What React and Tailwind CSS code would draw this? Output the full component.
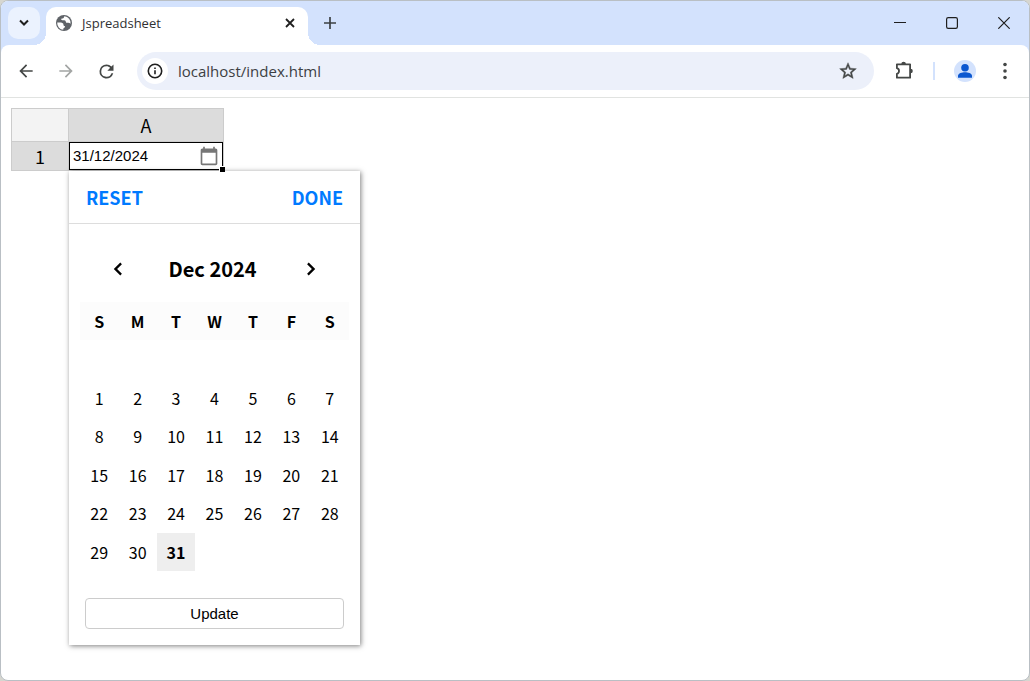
import React, { useState } from 'react';

const WEEKDAYS = ['S', 'M', 'T', 'W', 'T', 'F', 'S'];
const WEEKS = [0, 1, 2, 3, 4, 5].map((week) => (
    [1, 2, 3, 4, 5, 6, 7].map((day) => {
        const n = (week - 1) * 7 + day;
        return n > 0 && n <= 31 ? n : null;
    })
));

const iconButton = 'flex items-center justify-center shrink-0';

const GlobeIcon = () => (
    <svg width="18" height="18" viewBox="0 0 18 18" aria-hidden="true">
        <circle cx="9" cy="9" r="8" fill="#5f6368" />
        <path d="M9.5 2.2c-.8.7-.4 1.7-1.4 2-.9.3-1.8.1-1.9 1-.1.8.9 1 1.9 1 1.6 0 2.7.2 2.7 1.5 0 1 1.1 1.2 2 1.1 1-.1 1.9.1 2.800.9A6.800 6.800 0 0 0 9.500 2.200z" fill="#fff" />
        <path d="M2.200 8.600h3.600c1.600 0 2.700.9 2.700 2.300 0 .8.7.9 1.200 1.200.6.500.2 1.400-.5 1.700-.8.400-.9 1-.9 2A6.800 6.800 0 0 1 2.200 8.600z" fill="#fff" />
    </svg>
);

const PuzzleIcon = () => (
    <svg width="22" height="22" viewBox="0 0 22 22" fill="none" aria-hidden="true">
        <path d="M3.900 4.300h13.200v13.400H3.900v-3.900a2.900 2.900 0 0 0 0-5.600z" stroke="#444746" strokeWidth="1.800" strokeLinejoin="round" />
        <path d="M8.300 4a2.300 2.300 0 0 1 4.600 0zM17.500 8.700a2.300 2.300 0 0 1 0 4.600z" fill="#444746" />
    </svg>
);

const CalendarIcon = () => (
    <svg width="20" height="20" viewBox="0 0 24 24" fill="#767676" aria-hidden="true">
        <path d="M20 3h-1V1h-2v2H7V1H5v2H4c-1.100 0-2 .9-2 2v16c0 1.100.9 2 2 2h16c1.100 0 2-.9 2-2V5c0-1.100-.9-2-2-2zm0 18H4V8h16v13z" />
    </svg>
);

const Chevron = ({ flip }) => (
    <svg width="24" height="24" viewBox="0 0 24 24" className={flip ? 'rotate-180' : ''} aria-hidden="true">
        <path d="M15.900 7.200 14.300 5.500 7.800 12l6.500 6.500 1.600-1.700L11.100 12z" />
    </svg>
);

const TabStrip = () => (
    <div className="flex h-11 shrink-0 items-start bg-[#d3e2fd] pl-[7px]">
        <button aria-label="Search tabs" className={`${iconButton} mt-1.5 h-8 w-8 rounded-[10px] bg-[#ebf2fe]`}>
            <svg width="12" height="8" viewBox="0 0 12 8" fill="none" stroke="#1f1f1f" strokeWidth="2">
                <path d="m2 1.500 4 4 4-4" />
            </svg>
        </button>
        <div className="relative ml-1.5 mt-1.5 flex h-[38px] w-[262px] items-center rounded-t-[10px] bg-white pb-1.5 pl-[9px] pr-3 before:absolute before:-left-3 before:bottom-0 before:h-3 before:w-3 before:bg-[radial-gradient(circle_at_0_0,transparent_12px,white_12px)] after:absolute after:-right-3 after:bottom-0 after:h-3 after:w-3 after:bg-[radial-gradient(circle_at_100%_0,transparent_12px,white_12px)]">
            <GlobeIcon />
            <span className="ml-[9px] flex-1 font-['Open_Sans',sans-serif] text-[13px] leading-5 text-[#303133]">Jspreadsheet</span>
            <button aria-label="Close tab" className={`${iconButton} h-3 w-3`}>
                <svg width="12" height="12" viewBox="0 0 12 12" stroke="#1f1f1f" strokeWidth="1.800">
                    <path d="m2 2 8 8M10 2l-8 8" />
                </svg>
            </button>
        </div>
        <button aria-label="New tab" className={`${iconButton} ml-3 mt-3 h-5 w-5`}>
            <svg width="14" height="14" viewBox="0 0 14 14" stroke="#3c4043" strokeWidth="1.700">
                <path d="M7 1v12M1 7h12" />
            </svg>
        </button>
        <div className="ml-auto mt-4 flex gap-10 pr-[19px]">
            <button aria-label="Minimize">
                <svg width="12" height="12" viewBox="0 0 12 12" stroke="#1f1f1f" strokeWidth="1.200"><path d="M0 5.500h12" /></svg>
            </button>
            <button aria-label="Maximize">
                <svg width="12" height="12" viewBox="0 0 12 12" fill="none" stroke="#1f1f1f" strokeWidth="1.200"><rect x=".6" y=".6" width="10.800" height="10.800" rx="1.600" /></svg>
            </button>
            <button aria-label="Close">
                <svg width="12" height="12" viewBox="0 0 12 12" stroke="#1f1f1f" strokeWidth="1.200"><path d="m.3.3 11.400 11.400M11.700.3.300 11.700" /></svg>
            </button>
        </div>
    </div>
);

const Toolbar = () => (
    <div className="shrink-0 bg-[#d3e2fd]">
        <div className="flex h-[53px] items-center rounded-t-lg border-b border-[#e1e3e1] bg-white pl-[15px] pr-[14px]">
            <div className="flex gap-5">
                <button aria-label="Back" className={iconButton}>
                    <svg width="20" height="20" viewBox="0 0 24 24" fill="#444746"><path d="M20 11H7.800l5.600-5.600L12 4l-8 8 8 8 1.400-1.400L7.800 13H20z" /></svg>
                </button>
                <button aria-label="Forward" className={iconButton}>
                    <svg width="20" height="20" viewBox="0 0 24 24" fill="#a3a5a4"><path d="m12 4-1.400 1.400 5.600 5.600H4v2h12.200l-5.600 5.600L12 20l8-8z" /></svg>
                </button>
                <button aria-label="Reload" className={iconButton}>
                    <svg width="21" height="21" viewBox="0 0 24 24" fill="#444746"><path d="M17.650 6.350A7.960 7.960 0 0 0 12 4a8 8 0 1 0 7.730 10h-2.080A6 6 0 1 1 12 6c1.660 0 3.140.69 4.220 1.780L13 11h7V4z" /></svg>
                </button>
            </div>
            <div className="ml-5 flex h-[38px] flex-1 items-center rounded-full bg-[#ecf0fa] pl-[5px] pr-4">
                <button aria-label="View site information" className={`${iconButton} h-[26px] w-[26px] rounded-full bg-white`}>
                    <svg width="16" height="16" viewBox="0 0 16 16" fill="none" stroke="#1f1f1f" strokeWidth="1.600">
                        <circle cx="8" cy="8" r="6.700" />
                        <path d="M8 7.300v4M8 4.400v1.600" />
                    </svg>
                </button>
                <input aria-label="Address" defaultValue="localhost/index.html" className="ml-2.5 min-w-0 flex-1 bg-transparent font-['Open_Sans',sans-serif] text-[15px] text-[#3c3f43] outline-none" />
                <button aria-label="Bookmark this tab" className={iconButton}>
                    <svg width="20" height="20" viewBox="0 0 24 24" fill="#444746" stroke="#444746" strokeWidth=".5"><path d="m22 9.240-7.190-.62L12 2 9.190 8.630 2 9.240l5.460 4.730L5.820 21 12 17.270 18.180 21l-1.630-7.030zM12 15.400l-3.760 2.270 1-4.280-3.320-2.880 4.380-.38L12 6.100l1.710 4.040 4.380.38-3.320 2.880 1 4.280z" /></svg>
                </button>
            </div>
            <button aria-label="Extensions" className={`${iconButton} ml-[19px]`}>
                <PuzzleIcon />
            </button>
            <span className="ml-[18px] h-[18px] w-0.5 bg-[#d3e2fd]" />
            <button aria-label="Profile" className={`${iconButton} ml-[19px] h-[22px] w-[22px] rounded-full bg-[#d3e2fd]`}>
                <svg width="22" height="22" viewBox="0 0 22 22" fill="#0b57d0">
                    <circle cx="11" cy="7.800" r="3.800" />
                    <path d="M4 17.800v-2c0-2.400 4.200-3.500 7-3.500s7 1.100 7 3.500v2z" />
                </svg>
            </button>
            <button aria-label="Menu" className={`${iconButton} ml-[19px] h-5 w-5`}>
                <svg width="4" height="18" viewBox="0 0 4 18" fill="#444746">
                    <circle cx="2" cy="2.500" r="1.800" />
                    <circle cx="2" cy="9" r="1.800" />
                    <circle cx="2" cy="15.500" r="1.800" />
                </svg>
            </button>
        </div>
    </div>
);

const CalendarPopup = ({ selected, onSelect }) => (
    <div className="absolute left-[58px] top-full w-[291px] bg-white pb-4 shadow-[1px_1px_5px_rgba(0,0,0,0.5)]">
        <div className="flex h-[53px] items-center justify-between border-b border-[#ddd] px-[17px] text-lg font-bold text-[#007aff]">
            <button>RESET</button>
            <button>DONE</button>
        </div>
        <div className="mx-auto mt-[31px] flex h-7 w-[217px] items-center justify-between">
            <button aria-label="Previous month"><Chevron /></button>
            <button className="pr-1 text-xl font-bold">Dec 2024</button>
            <button aria-label="Next month"><Chevron flip /></button>
        </div>
        <table className="mx-auto mt-[19px] h-[269px] w-[269px] table-fixed border-collapse text-center text-base">
            <thead>
                <tr className="h-[38px] bg-[#fcfcfc]">
                    {WEEKDAYS.map((day, i) => (
                        <th key={i} className="p-0 font-bold">{day}</th>
                    ))}
                </tr>
            </thead>
            <tbody>
                {WEEKS.map((week, i) => (
                    <tr key={i} className="h-[38px]">
                        {week.map((day, j) => (
                            <td key={j} className={day === selected ? 'bg-[#eee] p-0 font-bold' : 'p-0'}>
                                {day && <button className="w-full" onClick={() => onSelect(day)}>{day}</button>}
                            </td>
                        ))}
                    </tr>
                ))}
            </tbody>
        </table>
        <div className="px-4 pt-[27px]">
            <button className="h-[31px] w-full rounded border border-[#ccc] font-['Liberation_Sans',sans-serif] text-[15px] leading-none">Update</button>
        </div>
    </div>
);

const Spreadsheet = () => {
    const [day, setDay] = useState(31);

    return (
        <div className="relative w-fit font-['Noto_Sans_CJK_SC',sans-serif] text-black">
            <table className="table-fixed border-collapse">
                <thead>
                    <tr className="h-[33px]">
                        <th className="w-[57px] border border-[#ccc] bg-[#f3f3f3] p-0" />
                        <th scope="col" className="w-[155px] border border-[#ccc] bg-[#dcdcdc] p-0 text-lg font-normal leading-6">A</th>
                    </tr>
                </thead>
                <tbody>
                    <tr className="h-[29px]">
                        <th scope="row" className="border border-[#ccc] bg-[#dcdcdc] p-0 text-lg font-normal leading-6">1</th>
                        <td className="relative border border-[#ccc] p-0">
                            <div className="flex items-center pb-px pl-1 pr-1">
                                <input
                                    aria-label="A1"
                                    readOnly
                                    value={`${String(day).padStart(2, '0')}/12/2024`}
                                    className="w-0 flex-1 font-['Liberation_Sans',sans-serif] text-[15px] leading-5 outline-none"
                                />
                                <CalendarIcon />
                            </div>
                            {/* selection outline and fill handle */}
                            <span className="pointer-events-none absolute inset-0 border border-black" />
                            <span className="absolute -bottom-0.5 -right-0.5 z-10 h-1.5 w-1.5 border-l border-t border-white bg-black" />
                        </td>
                    </tr>
                </tbody>
            </table>
            <CalendarPopup selected={day} onSelect={setDay} />
        </div>
    );
};

const App = () => (
    <div className="bg-[#d6d6d0]">
        <div className="flex min-h-screen flex-col overflow-hidden rounded-lg border border-[#b9bfc4] bg-white">
            <TabStrip />
            <Toolbar />
            <main className="flex-1 p-2.5">
                <Spreadsheet />
            </main>
        </div>
    </div>
);

export default App;
